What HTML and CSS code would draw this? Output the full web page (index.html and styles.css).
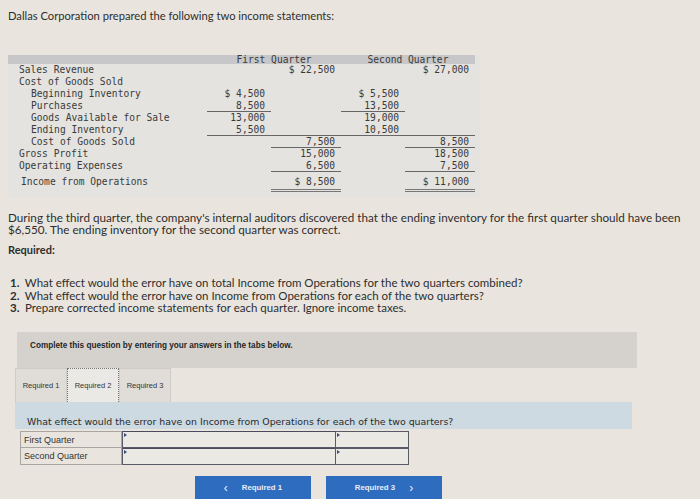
FILE: index.html
```html
<!DOCTYPE html>
<html>
<head>
<meta charset="utf-8">
<link rel="stylesheet" href="styles.css">
</head>
<body>
<p class="title">Dallas Corporation prepared the following two income statements:</p>

<div class="stmt">
  <div class="hdr lab"></div>
  <div class="hdr q">First Quarter</div>
  <div class="hdr q">Second Quarter</div>

  <div class="lab">Sales Revenue</div><div></div><div class="v">$ 22,500</div><div></div><div class="v">$ 27,000</div>
  <div class="lab">Cost of Goods Sold</div><div></div><div></div><div></div><div></div>
  <div class="lab in">Beginning Inventory</div><div class="v">$ 4,500</div><div></div><div class="v">$ 5,500</div><div></div>
  <div class="lab in">Purchases</div><div class="v ul">8,500</div><div></div><div class="v ul">13,500</div><div></div>
  <div class="lab in">Goods Available for Sale</div><div class="v">13,000</div><div></div><div class="v">19,000</div><div></div>
  <div class="lab in">Ending Inventory</div><div class="v ul">5,500</div><div class="ul"></div><div class="v ul">10,500</div><div class="ul"></div>
  <div class="lab in">Cost of Goods Sold</div><div></div><div class="v ul">7,500</div><div></div><div class="v ul">8,500</div>
  <div class="lab">Gross Profit</div><div></div><div class="v">15,000</div><div></div><div class="v">18,500</div>
  <div class="lab">Operating Expenses</div><div></div><div class="v ul">6,500</div><div></div><div class="v ul">7,500</div>
  <div class="lab last">Income from Operations</div><div class="last"></div><div class="v last dul">$ 8,500</div><div class="last"></div><div class="v last dul">$ 11,000</div>
</div>

<p class="para">During the third quarter, the company's internal auditors discovered that the ending inventory for the first quarter should have been $6,550. The ending inventory for the second quarter was correct.</p>

<p class="req">Required:</p>

<ol class="list">
  <li><b>1.</b> What effect would the error have on total Income from Operations for the two quarters combined?</li>
  <li><b>2.</b> What effect would the error have on Income from Operations for each of the two quarters?</li>
  <li><b>3.</b> Prepare corrected income statements for each quarter. Ignore income taxes.</li>
</ol>

<div class="complete">Complete this question by entering your answers in the tabs below.</div>

<div class="tabs">
  <div class="tab">Required 1</div>
  <div class="tab active">Required 2</div>
  <div class="tab">Required 3</div>
</div>

<div class="panel">What effect would the error have on Income from Operations for each of the two quarters?</div>

<div class="answers">
  <div class="alab">First Quarter</div><div class="inp big"></div><div class="inp small"></div>
  <div class="alab">Second Quarter</div><div class="inp big"></div><div class="inp small"></div>
</div>

<div class="nav">
  <div class="btn prev"><span class="chev">&lsaquo;</span>Required 1</div>
  <div class="btn next">Required 3<span class="chev">&rsaquo;</span></div>
</div>
</body>
</html>
```

FILE: styles.css
```css
html, body {
  margin: 0;
  padding: 0;
  background: #e9e5de;
  color: #2e2e2e;
  font-family: Lato, "Open Sans", sans-serif;
}
body {
  height: 499px;
  overflow: hidden;
}
.title {
  margin: 0;
  padding: 9px 0 0 8px;
  font-size: 11.2px;
  line-height: 14px;
}
.stmt {
  margin: 32px 0 0 8px;
  width: 472px;
  display: grid;
  grid-template-columns: 199px 64px 70px 64px 70px;
  font-family: "DejaVu Sans Mono", monospace;
  font-size: 9.6px;
  color: #3a3a3a;
  background: #e4e3df;
  padding-bottom: 6px;
}
.stmt > div {
  height: 12px;
  line-height: 12px;
  box-sizing: border-box;
}
.stmt .hdr {
  height: 9px;
  line-height: 9px;
  background: #c7c6c8;
}
.stmt .hdr.q {
  grid-column: span 2;
  text-align: center;
}
.lab { padding-left: 11px; white-space: nowrap; }
.lab.in { padding-left: 23px; }
.lab.last { padding-left: 13px; }
.v { text-align: right; padding-right: 6px; }
.ul { border-bottom: 1px solid #666; }
.stmt > .last { height: 20px; line-height: 19px; }
.dul { border-bottom: 3px double #777; }

.para {
  margin: 14px 0 0 8px;
  width: 688px;
  font-size: 11.7px;
  line-height: 11.5px;
}
.req {
  margin: 8px 0 0 8px;
  font-size: 11px;
  font-weight: bold;
  line-height: 14px;
}
.list {
  list-style: none;
  margin: 20px 0 0 10px;
  padding: 0;
  font-size: 11.5px;
  line-height: 12.5px;
}
.list b { display: inline-block; width: 12px; }

.complete {
  margin: 17px 0 0 17px;
  width: 620px;
  height: 36px;
  box-sizing: border-box;
  padding: 7px 0 0 13px;
  background: #d5d2cd;
  font-family: "Liberation Sans", Arial, sans-serif;
  font-weight: bold;
  font-size: 8.2px;
  line-height: 14px;
  color: #262626;
}
.tabs {
  display: flex;
  margin-left: 15px;
  height: 34px;
}
.tab {
  width: 52px;
  box-sizing: border-box;
  border: 1px solid #cfccc7;
  border-bottom: none;
  background: #e0ddd8;
  font-family: "Liberation Sans", Arial, sans-serif;
  font-size: 7.5px;
  color: #333;
  padding-top: 12px;
  text-align: center;
}
.tab.active {
  background: #ebe9e5;
  border: 1px dotted #777;
  border-bottom: none;
}
.panel {
  margin-left: 15px;
  width: 617px;
  height: 27px;
  box-sizing: border-box;
  padding: 14px 0 0 12px;
  background: #cddae2;
  font-family: "DejaVu Sans", sans-serif;
  font-size: 9.4px;
  line-height: 12px;
  color: #2a2a2a;
}
.answers {
  margin: 2px 0 0 20px;
  display: grid;
  grid-template-columns: 102px 214px 73px;
  width: 389px;
  font-family: "Liberation Sans", Arial, sans-serif;
  font-size: 9px;
}
.alab {
  height: 17px;
  line-height: 16px;
  box-sizing: border-box;
  border: 1px solid #a9a6a2;
  border-top-width: 0;
  padding-left: 3px;
  color: #333;
}
.alab:first-child { border-top-width: 1px; }
.inp {
  position: relative;
  height: 17px;
  box-sizing: border-box;
  border: 1px solid #585a66;
  border-left-width: 0;
  background: #ebe9e4;
}
.inp.big { border-left-width: 1px; border-top: 1.5px solid #4a4c5e; }
.inp::before {
  content: "";
  position: absolute;
  left: 1px;
  top: 1px;
  border-left: 3px solid #3a4a7a;
  border-top: 2px solid transparent;
  border-bottom: 2px solid transparent;
}
.nav {
  display: flex;
  gap: 15px;
  margin: 11px 0 0 195px;
}
.btn {
  width: 116px;
  height: 24px;
  background: #2e6cc0;
  color: #e8eef8;
  font-family: "Liberation Sans", Arial, sans-serif;
  font-weight: bold;
  font-size: 7.8px;
  display: flex;
  align-items: center;
  justify-content: center;
  gap: 14px;
}
.chev {
  font-size: 12px;
  font-weight: normal;
  line-height: 10px;
}
```
